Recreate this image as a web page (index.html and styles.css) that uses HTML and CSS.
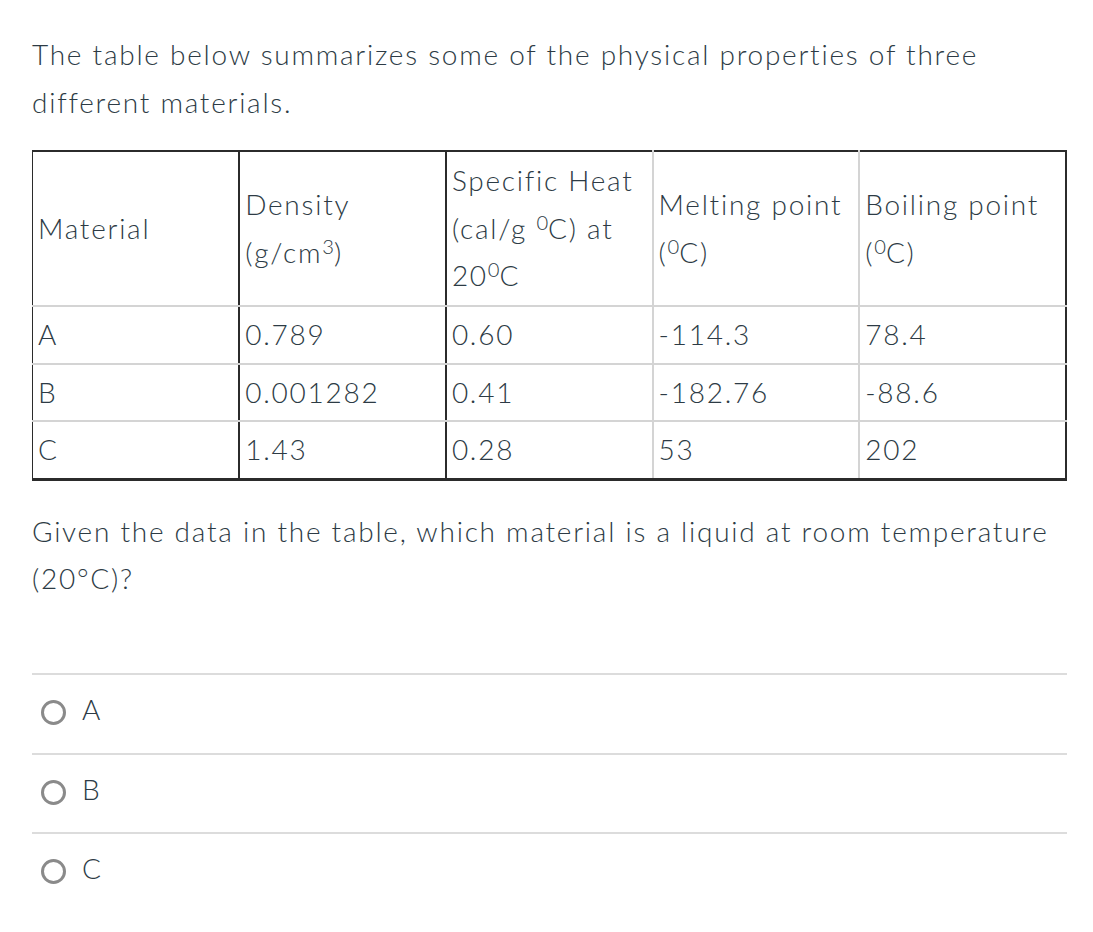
FILE: index.html
```html
<!DOCTYPE html>
<html lang="en">
<head>
<meta charset="utf-8">
<title>Question</title>
<link rel="stylesheet" href="styles.css">
</head>
<body>
<div class="page">
  <p class="intro">The table below summarizes some of the physical properties of three different materials.</p>
  <table class="props">
    <colgroup>
      <col class="c"><col class="c"><col class="c"><col class="c"><col class="c">
    </colgroup>
    <thead>
      <tr>
        <th>Material</th>
        <th>Density<br>(g/cm<sup>3</sup>)</th>
        <th>Specific Heat<br>(cal/g <sup>0</sup>C) at<br>20<sup>0</sup>C</th>
        <th>Melting point<br>(<sup>0</sup>C)</th>
        <th>Boiling point<br>(<sup>0</sup>C)</th>
      </tr>
    </thead>
    <tbody>
      <tr><td>A</td><td>0.789</td><td>0.60</td><td>-114.3</td><td>78.4</td></tr>
      <tr><td>B</td><td>0.001282</td><td>0.41</td><td>-182.76</td><td>-88.6</td></tr>
      <tr><td>C</td><td>1.43</td><td>0.28</td><td>53</td><td>202</td></tr>
    </tbody>
  </table>
  <p class="question">Given the data in the table, which material is a liquid at room temperature (20°C)?</p>
  <div class="answers">
    <label class="answer"><span class="radio"></span><span class="answer-text">A</span></label>
    <label class="answer"><span class="radio"></span><span class="answer-text">B</span></label>
    <label class="answer"><span class="radio"></span><span class="answer-text">C</span></label>
  </div>
</div>
</body>
</html>
```

FILE: styles.css
```css
html, body {
  margin: 0;
  padding: 0;
  background: #ffffff;
}

body {
  font-family: Lato, "Open Sans", "Liberation Sans", sans-serif;
  font-weight: 300;
  font-size: 28px;
  line-height: 1.7;
  letter-spacing: 1.75px;
  color: #2d3b45;
}

.page {
  padding: 31px 26px 0 32px;
}

.intro {
  margin: 0 0 24px 0;
}

.props {
  width: 1035px;
  table-layout: fixed;
  border-collapse: collapse;
}

.props th,
.props td {
  font-weight: 300;
  text-align: left;
  vertical-align: middle;
  padding: 4px 4px 4px 5px;
  border: 2px solid #d4d4d4;
}

.props th {
  padding-top: 5px;
  padding-bottom: 5px;
}

.props th:nth-child(1),
.props td:nth-child(1),
.props th:nth-child(2),
.props td:nth-child(2) {
  border-right: 2px solid #2b2b2b;
}

.props th:first-child,
.props td:first-child {
  border-left: 1px solid #2b2b2b;
}

.props th:last-child,
.props td:last-child {
  border-right: 2px solid #2b2b2b;
}

.props th {
  border-top: 2px solid #2b2b2b;
}

.props tbody tr:last-child td {
  border-bottom: 3px solid #2b2b2b;
}

.props sup {
  font-size: 0.72em;
  line-height: 0;
  vertical-align: 0.45em;
  letter-spacing: 0;
}

.question {
  margin: 27px 0 70px 0;
}

.answers {
  display: flex;
  flex-direction: column;
}

.answer {
  display: flex;
  align-items: center;
  gap: 16px;
  padding: 11px 0 19px 9px;
  border-top: 2px solid #dcdcdc;
}

.radio {
  display: block;
  width: 19px;
  height: 19px;
  border: 3px solid #8a8a8a;
  border-radius: 50%;
  margin-top: 6px;
  flex: none;
}

.answer-text {
  display: block;
}
```
